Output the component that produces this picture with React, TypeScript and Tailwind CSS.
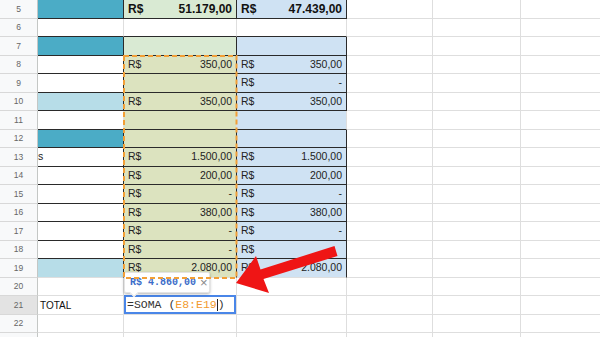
import React from "react";

type Cell = {
  bg?: string;
  cur?: string;
  val?: string;
  bold?: boolean;
  text?: string;
};

type Row = {
  n: number;
  h: string;
  d?: Cell;
  e?: Cell;
  f?: Cell;
  box?: boolean;
  bottom?: boolean;
};

const TEAL = "bg-[#4bacc6]";
const LTEAL = "bg-[#b7dde8]";
const GREEN = "bg-[#d9ead3]";
const OLIVE = "bg-[#dce3bf]";
const BLUE = "bg-[#cfe2f3]";

const rows: Row[] = [
  { n: 5, h: "h-[19px]", d: { bg: TEAL }, e: { bg: GREEN, cur: "R$", val: "51.179,00", bold: true }, f: { bg: BLUE, cur: "R$", val: "47.439,00", bold: true }, box: true, bottom: true },
  { n: 6, h: "h-[18px]", bottom: true },
  { n: 7, h: "h-[19px]", d: { bg: TEAL }, e: { bg: GREEN }, f: { bg: BLUE }, box: true, bottom: true },
  { n: 8, h: "h-[18px]", e: { bg: OLIVE, cur: "R$", val: "350,00" }, f: { bg: BLUE, cur: "R$", val: "350,00" }, box: true, bottom: true },
  { n: 9, h: "h-[19px]", e: { bg: OLIVE }, f: { bg: BLUE, cur: "R$", val: "-" }, box: true, bottom: true },
  { n: 10, h: "h-[18px]", d: { bg: LTEAL }, e: { bg: OLIVE, cur: "R$", val: "350,00" }, f: { bg: BLUE, cur: "R$", val: "350,00" }, box: true, bottom: true },
  { n: 11, h: "h-[19px]", e: { bg: OLIVE }, f: { bg: BLUE }, bottom: true },
  { n: 12, h: "h-[18px]", d: { bg: TEAL }, e: { bg: OLIVE }, f: { bg: BLUE }, box: true, bottom: true },
  { n: 13, h: "h-[19px]", d: { text: "s" }, e: { bg: OLIVE, cur: "R$", val: "1.500,00" }, f: { bg: BLUE, cur: "R$", val: "1.500,00" }, box: true, bottom: true },
  { n: 14, h: "h-[18px]", e: { bg: OLIVE, cur: "R$", val: "200,00" }, f: { bg: BLUE, cur: "R$", val: "200,00" }, box: true, bottom: true },
  { n: 15, h: "h-[19px]", e: { bg: OLIVE, cur: "R$", val: "-" }, f: { bg: BLUE, cur: "R$", val: "-" }, box: true, bottom: true },
  { n: 16, h: "h-[18px]", e: { bg: OLIVE, cur: "R$", val: "380,00" }, f: { bg: BLUE, cur: "R$", val: "380,00" }, box: true, bottom: true },
  { n: 17, h: "h-[19px]", e: { bg: OLIVE, cur: "R$", val: "-" }, f: { bg: BLUE, cur: "R$", val: "-" }, box: true, bottom: true },
  { n: 18, h: "h-[18px]", e: { bg: OLIVE, cur: "R$", val: "-" }, f: { bg: BLUE, cur: "R$" }, box: true, bottom: true },
  { n: 19, h: "h-[19px]", d: { bg: LTEAL }, e: { bg: OLIVE, cur: "R$", val: "2.080,00" }, f: { bg: BLUE, cur: "R$", val: "2.080,00" }, box: true },
  { n: 20, h: "h-[18px]" },
  { n: 21, h: "h-[19px]", d: { text: "TOTAL" } },
  { n: 22, h: "h-[18px]" },
  { n: 0, h: "h-[18px]" },
];

function DataCell({ cell, w, dark, darkBottom }: { cell?: Cell; w: string; dark?: boolean; darkBottom?: boolean }) {
  const c = cell ?? {};
  return (
    <div
      className={`flex shrink-0 items-center overflow-hidden border-r border-b px-[4px] ${w} ${dark ? "border-r-[#2a2a2a]" : "border-r-[#dedede]"} ${darkBottom ? "border-b-[#2a2a2a]" : "border-b-[#dedede]"} ${c.bg ?? "bg-white"} ${c.bold ? "text-[12px] font-bold text-[#111]" : "text-[10.5px] text-[#222]"}`}
    >
      {c.text && <span className={c.text === "TOTAL" ? "-ml-[2px] text-[10px] text-[#111]" : "-ml-[4px]"}>{c.text}</span>}
      {c.cur && <span>{c.cur}</span>}
      {c.val && <span className="ml-auto">{c.val}</span>}
    </div>
  );
}

function Editor() {
  return (
    <div className="relative w-[113px] shrink-0 border-r border-b border-r-[#dedede] border-b-[#dedede] bg-white">
      <div className="absolute -top-px left-0 right-0 bottom-0 flex items-center border-2 border-[#4a86e8] pl-px font-['Liberation_Mono',monospace] text-[11.5px] text-[#333]">
        <span>=SOMA (</span>
        <span className="text-[#f29a2e]">E8:E19</span>
        <span className="h-[12px] w-px bg-[#222]" />
        <span>)</span>
      </div>
    </div>
  );
}

export default function App() {
  return (
    <div className="relative h-[337px] w-[600px] overflow-hidden bg-white font-['Liberation_Sans',Arial,sans-serif]">
      {rows.map((r, i) => (
        <div key={i} className={`flex ${r.h}`}>
          <div
            className={`flex w-[38px] shrink-0 items-center justify-center border-r border-b border-r-[#c4c7c5] border-b-[#d8d8d8] text-[8.5px] text-[#666] ${r.n === 21 ? "bg-[#e3e3e3]" : "bg-[#f8f9fa]"}`}
          >
            {r.n > 0 ? r.n : ""}
          </div>
          <DataCell cell={r.d} w="w-[86px]" dark={r.box} darkBottom={r.bottom} />
          {r.n === 21 ? <Editor /> : <DataCell cell={r.e} w="w-[113px]" dark={r.box} darkBottom={r.bottom} />}
          <DataCell cell={r.f} w="w-[110px]" dark={r.box} darkBottom={r.bottom} />
          <DataCell w="w-[86px]" />
          <DataCell w="w-[88px]" />
          <DataCell w="w-[100px]" />
        </div>
      ))}

      {/* formula result tooltip */}
      <div className="absolute left-[124px] top-[272px] flex h-[21px] w-[86px] items-center rounded-[2px] border border-[#e4e4e4] bg-white pl-[5px] shadow-[0_1px_3px_rgba(0,0,0,0.3)]">
        <span className="font-['Liberation_Mono',monospace] text-[10px] font-bold text-[#3b6cc8]">R$ 4.860,00</span>
        <span className="ml-[4px] text-[13px] leading-none text-[#888]">×</span>
        <div className="absolute -bottom-[4px] left-[6px] h-[6px] w-[6px] rotate-45 border-r border-b border-[#e4e4e4] bg-white" />
      </div>

      <svg className="pointer-events-none absolute inset-0" width="600" height="337" viewBox="0 0 600 337">
        <rect x="124" y="56" width="112.5" height="222" fill="none" stroke="#f29f37" strokeWidth="2" strokeDasharray="5 3" />
        <polygon points="236,283 256,256 260.5,269.5 334.5,246 337.5,256 263.5,279 269,293" fill="#ef1515" />
      </svg>
    </div>
  );
}
